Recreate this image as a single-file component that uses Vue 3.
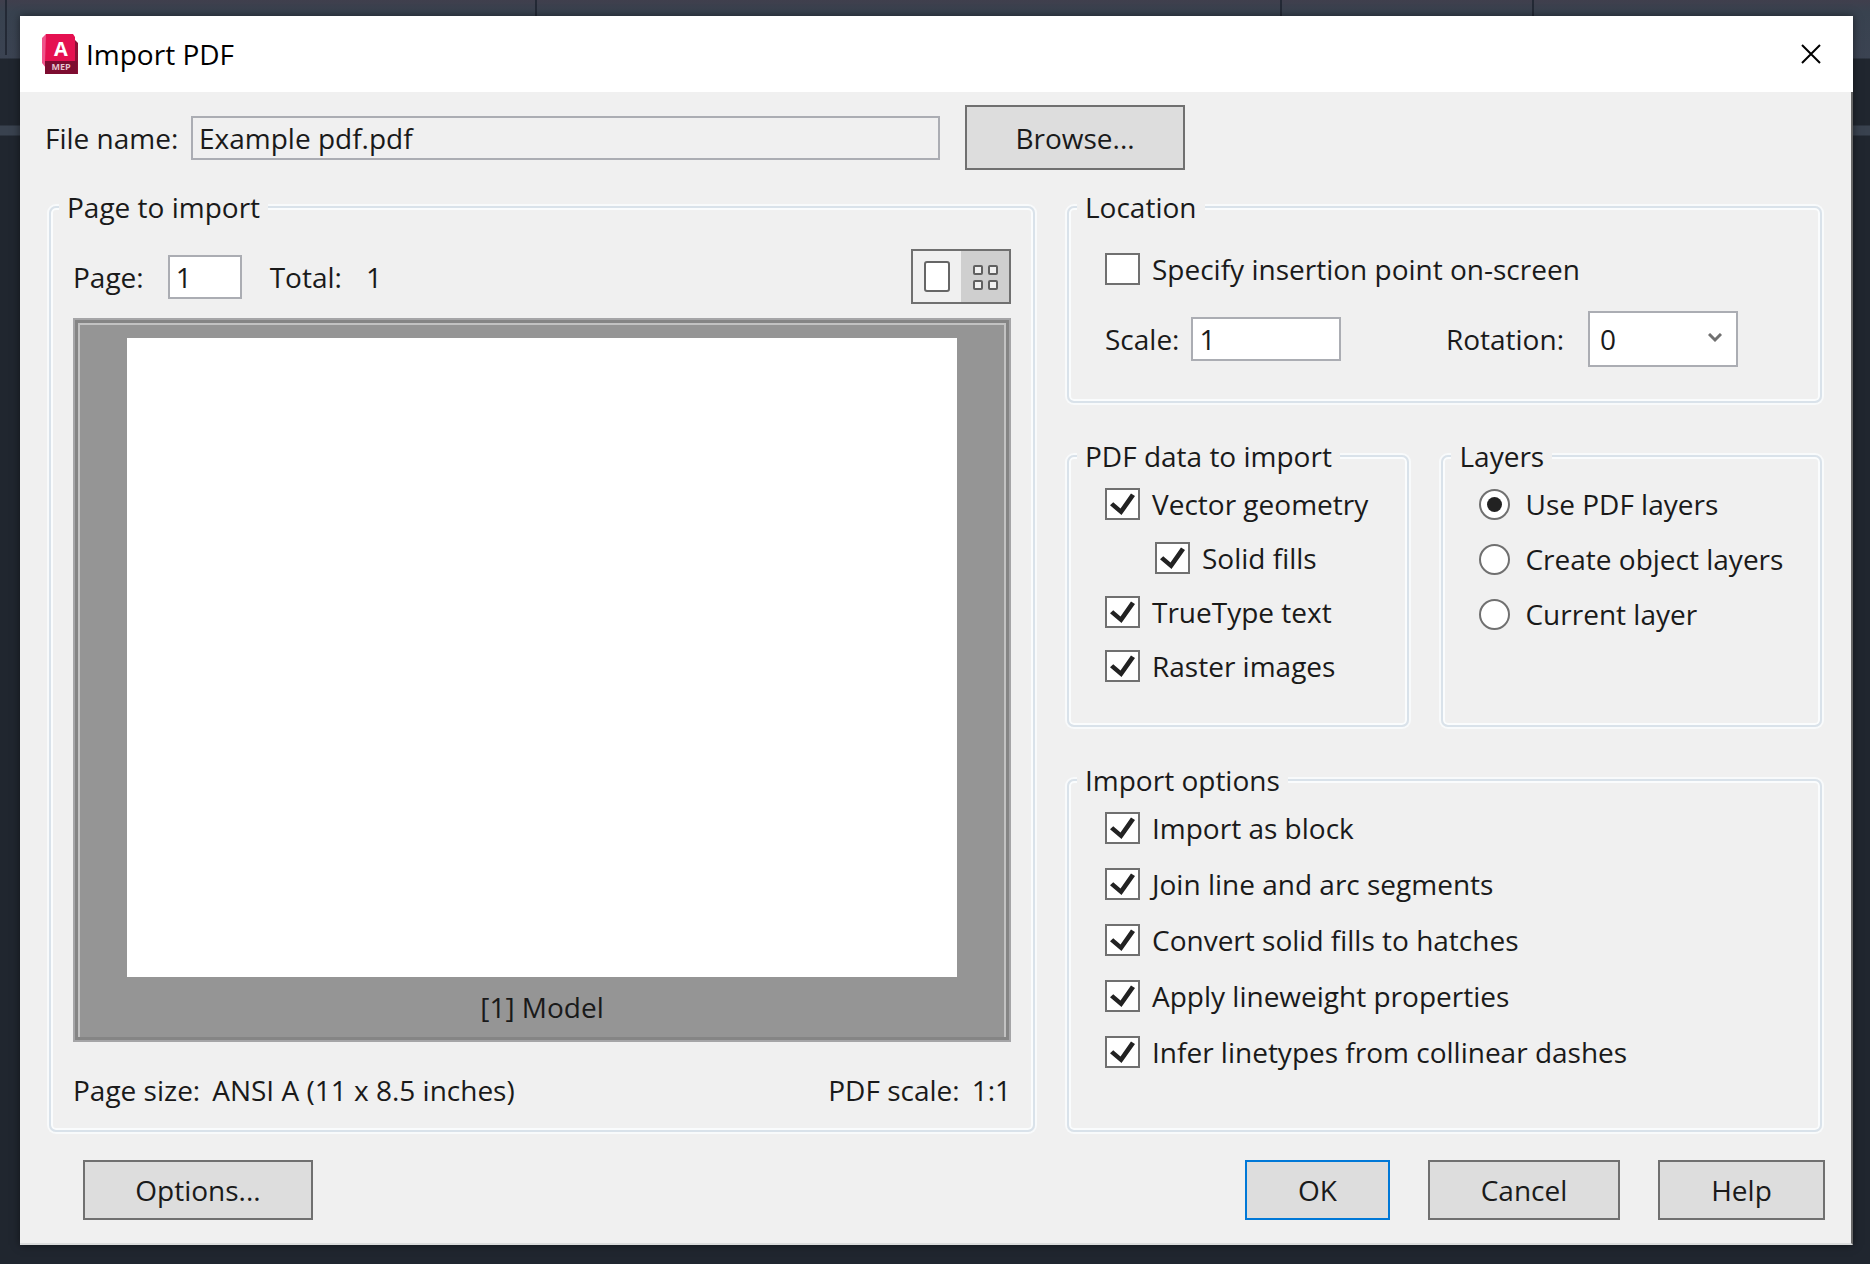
<script setup>
/**
 * ImportPdfDialog - settings dialog for importing a PDF page into the drawing
 */
import { ref, reactive } from 'vue'

const fileName = ref('Example pdf.pdf')
const page = ref('1')
const viewMode = ref('single')

// Location
const location = reactive({
  onScreen: false,
  scale: '1',
  rotation: '0'
})

// PDF data to import
const dataOptions = reactive([
  { id: 'vector', label: 'Vector geometry', checked: true },
  { id: 'solid', label: 'Solid fills', checked: true, nested: true },
  { id: 'truetype', label: 'TrueType text', checked: true },
  { id: 'raster', label: 'Raster images', checked: true }
])

// Layers
const layerMode = ref('pdf')
const layerOptions = [
  { value: 'pdf', label: 'Use PDF layers' },
  { value: 'object', label: 'Create object layers' },
  { value: 'current', label: 'Current layer' }
]

// Import options
const importOptions = reactive([
  { id: 'block', label: 'Import as block', checked: true },
  { id: 'join', label: 'Join line and arc segments', checked: true },
  { id: 'hatch', label: 'Convert solid fills to hatches', checked: true },
  { id: 'lineweight', label: 'Apply lineweight properties', checked: true },
  { id: 'linetype', label: 'Infer linetypes from collinear dashes', checked: true }
])
</script>

<template>
  <div class="workspace">
    <div class="dialog" role="dialog" aria-labelledby="dialog-title">
      <header class="title-bar">
        <svg class="app-icon" viewBox="0 0 36 40" width="36" height="40">
          <path d="M0 4L4 0V34L0 29z" fill="#f0538a" />
          <path d="M4 0H31L33 3V28H3z" fill="#e51050" />
          <path d="M33 6L36 9V40H33z" fill="#8d0f35" />
          <path d="M3 27H35V40H3z" fill="#7d0c30" />
          <text x="19" y="22" class="icon-letter">A</text>
          <text x="19" y="36" class="icon-tag">MEP</text>
        </svg>
        <h1 id="dialog-title" class="title">Import PDF</h1>
        <button class="close-btn" aria-label="Close">
          <svg viewBox="0 0 20 20" fill="none" stroke="currentColor" stroke-width="2" width="20" height="20">
            <path d="M1 1l18 18M1 19L19 1" />
          </svg>
        </button>
      </header>

      <div class="dialog-body">
        <div class="file-row">
          <label for="file-name">File name:</label>
          <input id="file-name" v-model="fileName" class="text-input file-input" type="text" readonly />
          <button class="btn btn-browse">Browse...</button>
        </div>

        <div class="columns">
          <fieldset class="group page-group">
            <legend>Page to import</legend>
            <div class="group-body">
              <div class="page-row">
                <label for="page">Page:</label>
                <input id="page" v-model="page" class="text-input page-input" type="text" />
                <span class="total">Total:</span>
                <span>1</span>
                <div class="view-toggle">
                  <button
                    :class="{ active: viewMode === 'single' }"
                    aria-label="Single page"
                    @click="viewMode = 'single'"
                  >
                    <svg viewBox="0 0 26 32" width="26" height="32" fill="#fff" stroke="#666" stroke-width="2">
                      <rect x="1" y="1" width="24" height="29" rx="2" />
                    </svg>
                  </button>
                  <button
                    :class="{ active: viewMode === 'thumbs' }"
                    aria-label="Thumbnails"
                    @click="viewMode = 'thumbs'"
                  >
                    <svg viewBox="0 0 28 28" width="28" height="28" fill="#f0f0f0" stroke="#606060" stroke-width="2">
                      <rect x="3" y="3" width="8" height="8" rx="1" />
                      <rect x="18" y="3" width="8" height="8" rx="1" />
                      <rect x="3" y="18" width="8" height="8" rx="1" />
                      <rect x="18" y="18" width="8" height="8" rx="1" />
                    </svg>
                  </button>
                </div>
              </div>

              <div class="preview">
                <div class="preview-inner">
                  <div class="preview-page"></div>
                  <div class="preview-caption">[1] Model</div>
                </div>
              </div>

              <div class="info-row">
                <span>Page size:</span>
                <span>ANSI A (11 x 8.5 inches)</span>
                <span class="pdf-scale">PDF scale:</span>
                <span>1:1</span>
              </div>
            </div>
          </fieldset>

          <div class="settings">
            <fieldset class="group location-group">
              <legend>Location</legend>
              <div class="group-body">
                <label class="option">
                  <input v-model="location.onScreen" type="checkbox" class="check" />
                  Specify insertion point on-screen
                </label>
                <div class="location-row">
                  <label for="scale">Scale:</label>
                  <input id="scale" v-model="location.scale" class="text-input scale-input" type="text" />
                  <label for="rotation" class="rotation-label">Rotation:</label>
                  <div class="select-wrap">
                    <select id="rotation" v-model="location.rotation">
                      <option>0</option>
                      <option>90</option>
                      <option>180</option>
                      <option>270</option>
                    </select>
                    <svg viewBox="0 0 14 10" width="14" height="10" fill="none" stroke="#707070" stroke-width="3">
                      <path d="M1 1l6 6l6-6" />
                    </svg>
                  </div>
                </div>
              </div>
            </fieldset>

            <fieldset class="group data-group">
              <legend>PDF data to import</legend>
              <div class="group-body">
                <label
                  v-for="option in dataOptions"
                  :key="option.id"
                  class="option"
                  :class="{ nested: option.nested }"
                >
                  <input v-model="option.checked" type="checkbox" class="check" />
                  {{ option.label }}
                </label>
              </div>
            </fieldset>

            <fieldset class="group layers-group">
              <legend>Layers</legend>
              <div class="group-body">
                <label v-for="option in layerOptions" :key="option.value" class="option option-radio">
                  <input v-model="layerMode" type="radio" name="layers" :value="option.value" class="radio" />
                  {{ option.label }}
                </label>
              </div>
            </fieldset>

            <fieldset class="group import-group">
              <legend>Import options</legend>
              <div class="group-body">
                <label v-for="option in importOptions" :key="option.id" class="option">
                  <input v-model="option.checked" type="checkbox" class="check" />
                  {{ option.label }}
                </label>
              </div>
            </fieldset>
          </div>
        </div>

        <footer class="footer">
          <button class="btn btn-options">Options...</button>
          <button class="btn btn-ok">OK</button>
          <button class="btn btn-cancel">Cancel</button>
          <button class="btn btn-help">Help</button>
        </footer>
      </div>
    </div>
  </div>
</template>

<style>
body {
  margin: 0;
  background: #20262f;
}
</style>

<style scoped>
* {
  box-sizing: border-box;
}

/* Dimmed ribbon of the application behind the dialog */
.workspace {
  min-height: 100vh;
  padding: 16px 17px 19px 20px;
  background:
    linear-gradient(#232935, #232935) 5px 0 / 2px 55px no-repeat,
    linear-gradient(#232935, #232935) 535px 0 / 2px 55px no-repeat,
    linear-gradient(#232935, #232935) 1280px 0 / 2px 55px no-repeat,
    linear-gradient(#232935, #232935) 1532px 0 / 2px 55px no-repeat,
    linear-gradient(#403f4d 0, #38424f 12px, #3b4352 58px, #20262f 59px, #20262f 125px, #39424f 126px, #39424f 135px, #20262f 136px);
  font-family: 'Open Sans', 'Noto Sans', sans-serif;
  font-size: 28px;
  line-height: 36px;
  color: #1a1a1a;
}

.dialog {
  background: #f0f0f0;
  box-shadow: 0 0 8px rgba(0, 0, 0, 0.5);
}

.title-bar {
  display: flex;
  align-items: center;
  height: 76px;
  padding: 0 32px 0 22px;
  background: #fff;
}

.icon-letter {
  font-size: 20px;
  font-weight: 700;
  fill: #fff;
  text-anchor: middle;
}

.icon-tag {
  font-size: 9px;
  font-weight: 700;
  fill: #e6c3ce;
  text-anchor: middle;
}

.title {
  margin: 0 auto 0 8px;
  font-size: 28px;
  font-weight: 400;
  color: #000;
}

.close-btn {
  display: flex;
  padding: 0;
  border: none;
  background: none;
  color: #000;
}

.dialog-body {
  padding: 13px 26px 23px 25px;
  border-right: 2px solid #666;
  border-bottom: 2px solid #dadcdc;
}

.file-row {
  display: flex;
  align-items: center;
  padding-right: 640px;
}

.file-row label {
  width: 146px;
}

input,
select,
button {
  font: inherit;
  color: inherit;
}

.text-input {
  height: 44px;
  padding: 0 6px;
  border: 2px solid #abadb3;
  border-radius: 0;
  background: #fff;
}

.file-input {
  flex: 1;
  min-width: 0;
  background: #f0f0f0;
}

.btn {
  height: 60px;
  padding: 0;
  border: 2px solid #707070;
  border-radius: 0;
  background: #ddd;
}

.btn-browse {
  width: 220px;
  height: 65px;
  margin-left: 25px;
}

.columns {
  display: grid;
  grid-template-columns: minmax(0, 986fr) minmax(0, 755fr);
  gap: 32px;
  margin: 19px 3px 28px 4px;
}

.group {
  display: flex;
  flex-direction: column;
  min-width: 0;
  margin: 0;
  padding: 0 8px;
  border: 2px solid #d9e2ea;
  border-radius: 7px;
  box-shadow: 0 0 0 2px #f8fafb, inset 0 0 0 2px #fafcfd;
}

.group legend {
  padding: 0 8px;
  background: #f0f0f0;
}

.group-body {
  display: flex;
  flex: 1;
  flex-direction: column;
}

.page-group .group-body {
  padding: 24px 14px 22px;
}

.page-row,
.info-row {
  display: flex;
  align-items: center;
}

.page-input {
  width: 74px;
  margin-left: 24px;
}

.total {
  margin: 0 24px 0 28px;
}

.view-toggle {
  display: flex;
  margin-left: auto;
  border: 2px solid #707070;
}

.view-toggle button {
  display: flex;
  align-items: center;
  justify-content: center;
  width: 48px;
  height: 51px;
  padding: 0;
  border: none;
  background: #cfcfcf;
}

.view-toggle .active {
  background: #f0f0f0;
}

.preview {
  display: flex;
  flex: 1;
  margin: 14px 0 30px;
  border: 2px solid #a5a5a7;
}

.preview-inner {
  display: flex;
  flex: 1;
  flex-direction: column;
  margin: 3px;
  padding: 13px 47px 0;
  border: 2px solid #c2c2c2;
  border-bottom: none;
  outline: 3px solid #858585;
  background: #959595;
}

.preview-page {
  flex: 1;
  background: #fff;
}

.preview-caption {
  padding: 12px 0;
  text-align: center;
}

.info-row {
  gap: 12px;
}

.pdf-scale {
  margin-left: auto;
}

.settings {
  display: grid;
  grid-template-columns: minmax(0, 342fr) minmax(0, 380fr);
  gap: 35px 32px;
}

.location-group,
.import-group {
  grid-column: 1 / -1;
}

.location-group .group-body {
  gap: 24px;
  padding: 26px 28px 34px;
}

.data-group .group-body {
  gap: 18px;
  padding: 12px 0 41px 28px;
}

.layers-group .group-body {
  gap: 19px;
  padding: 12px 0 41px 28px;
}

.import-group .group-body {
  gap: 20px;
  padding: 12px 28px 60px;
}

.option {
  display: flex;
  align-items: center;
  gap: 12px;
  white-space: nowrap;
}

.option-radio {
  gap: 15px;
}

.nested {
  margin-left: 50px;
}

.check,
.radio {
  display: grid;
  flex: none;
  place-items: center;
  margin: 0;
  border: 2px solid #707070;
  background: #fff;
  appearance: none;
}

.check {
  width: 35px;
  height: 32px;
}

.check:checked::after {
  content: '';
  width: 25px;
  height: 22px;
  background: #222;
  clip-path: polygon(0 56%, 13% 42%, 42% 70%, 84% 2%, 100% 14%, 46% 100%);
}

.radio {
  width: 31px;
  height: 31px;
  border-radius: 50%;
}

.radio:checked::after {
  content: '';
  width: 15px;
  height: 15px;
  border-radius: 50%;
  background: #222;
}

.location-row {
  display: flex;
  align-items: center;
}

.scale-input {
  width: 150px;
  margin-left: 12px;
}

.rotation-label {
  margin: 0 24px 0 auto;
}

.select-wrap {
  position: relative;
  margin-right: 46px;
}

.select-wrap select {
  display: block;
  width: 150px;
  height: 56px;
  padding: 0 10px;
  border: 2px solid #abadb3;
  border-radius: 0;
  background: #fff;
  appearance: none;
}

.select-wrap svg {
  position: absolute;
  top: 22px;
  right: 16px;
  pointer-events: none;
}

.footer {
  display: flex;
  gap: 38px;
  padding-left: 38px;
}

.btn-options {
  width: 230px;
  margin-right: auto;
}

.btn-ok {
  width: 145px;
  border-color: #0078d7;
}

.btn-cancel {
  width: 192px;
}

.btn-help {
  width: 167px;
}
</style>
